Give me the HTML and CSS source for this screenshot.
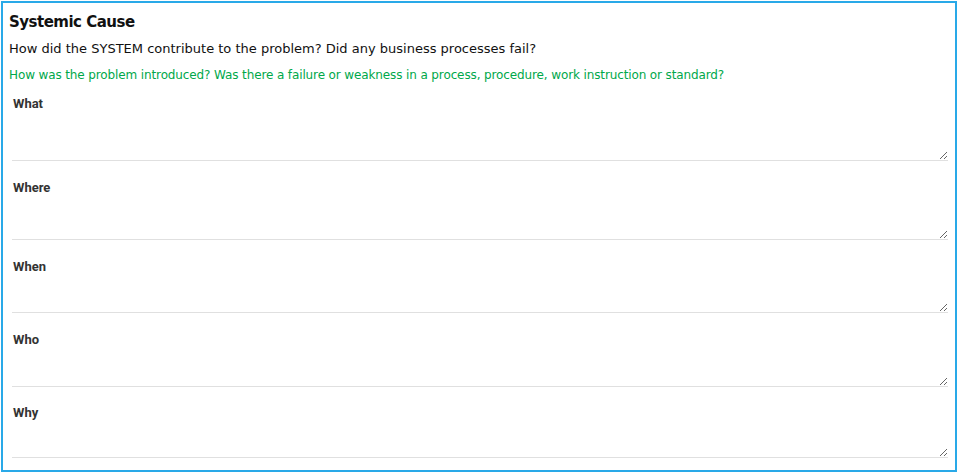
FILE: index.html
```html
<!DOCTYPE html>
<html>
<head>
<meta charset="utf-8">
<link rel="stylesheet" href="styles.css">
</head>
<body>
<div class="panel">
  <h2 class="title">Systemic Cause</h2>
  <p class="question">How did the SYSTEM contribute to the problem? Did any business processes fail?</p>
  <p class="hint">How was the problem introduced? Was there a failure or weakness in a process, procedure, work instruction or standard?</p>
  <div class="field f-what">
    <label class="label">What</label>
    <textarea class="input"></textarea>
  </div>
  <div class="field f-where">
    <label class="label">Where</label>
    <textarea class="input"></textarea>
  </div>
  <div class="field f-when">
    <label class="label">When</label>
    <textarea class="input"></textarea>
  </div>
  <div class="field f-who">
    <label class="label">Who</label>
    <textarea class="input"></textarea>
  </div>
  <div class="field f-why">
    <label class="label">Why</label>
    <textarea class="input"></textarea>
  </div>
</div>
</body>
</html>
```
FILE: styles.css
```css
html, body {
  margin: 0;
  padding: 0;
  background: #fff;
}
.panel {
  margin: 1px 2px 0 1px;
  height: 471px;
  box-sizing: border-box;
  border: 2px solid #29a9e8;
  padding: 8px 6px 0 6px;
  font-family: "DejaVu Sans", sans-serif;
  color: #111;
}
.title {
  margin: 0;
  font-size: 15px;
  font-weight: bold;
  line-height: 22px;
  letter-spacing: -0.5px;
}
.question {
  margin: 7px 0 0;
  font-size: 13px;
  line-height: 18px;
}
.hint {
  margin: 9px 0 0;
  font-size: 12px;
  line-height: 16px;
  letter-spacing: -0.12px;
  color: #00a84a;
}
.field {
  display: flex;
  flex-direction: column;
  margin: 0 1px 0 3px;
}
.label {
  font-family: Roboto, sans-serif;
  font-weight: bold;
  font-size: 13px;
  line-height: 16px;
  color: #333;
  padding-left: 1px;
}
.input {
  display: block;
  box-sizing: border-box;
  width: 100%;
  border: 0;
  border-bottom: 1px solid #e0e0e0;
  resize: vertical;
  padding: 0;
  margin: 0;
  outline: none;
  background: transparent;
}
.f-what { margin-top: 13px; }
.f-what .input { height: 49px; }
.f-where { margin-top: 19px; }
.f-where .input { height: 44px; }
.f-when { margin-top: 19px; }
.f-when .input { height: 38px; }
.f-who { margin-top: 19px; }
.f-who .input { height: 39px; }
.f-why { margin-top: 18px; }
.f-why .input { height: 37px; }
```
